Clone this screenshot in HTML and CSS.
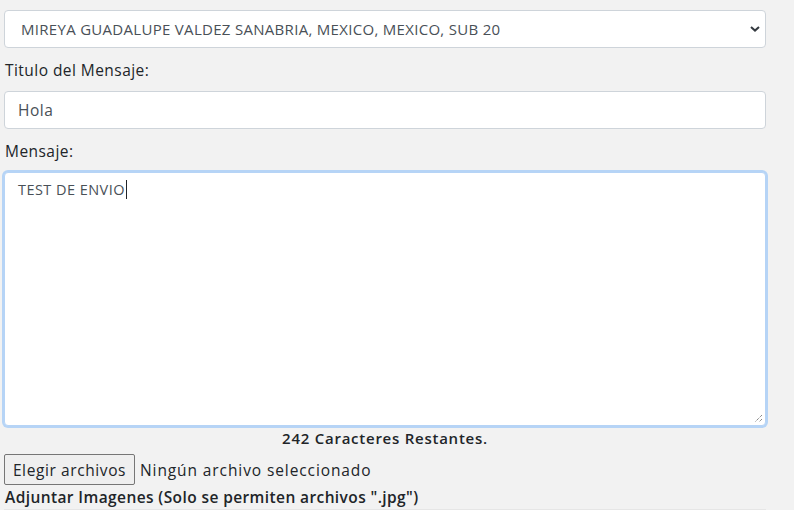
FILE: index.html
```html
<!DOCTYPE html>
<html lang="es">
<head>
<meta charset="utf-8">
<title>Mensaje</title>
<link rel="stylesheet" href="styles.css">
</head>
<body>
<main class="form">
  <div class="select">
    <span class="select-text">MIREYA GUADALUPE VALDEZ SANABRIA, MEXICO, MEXICO, SUB 20</span>
    <svg class="chev" width="10" height="6" viewBox="0 0 10 6"><path d="M1 1 L5 4.6 L9 1" fill="none" stroke="#343a40" stroke-width="2"/></svg>
  </div>
  <label class="label">Titulo del Mensaje:</label>
  <div class="input">Hola</div>
  <label class="label">Mensaje:</label>
  <div class="textarea">
    <span class="ta-text">TEST DE ENVIO</span><span class="caret"></span>
    <svg class="grip" width="9" height="9" viewBox="0 0 9 9"><path d="M8 1 L1 8 M8 5 L5 8" stroke="#555" stroke-width="1" stroke-dasharray="1 1" fill="none"/></svg>
  </div>
  <div class="counter">242 Caracteres Restantes.</div>
  <div class="file">
    <button class="file-btn" type="button">Elegir archivos</button>
    <span class="file-none">Ningún archivo seleccionado</span>
  </div>
  <div class="note">Adjuntar Imagenes (Solo se permiten archivos ".jpg")</div>
  <div class="rule"></div>
</main>
</body>
</html>
```

FILE: styles.css
```css
html, body {
  margin: 0;
  padding: 0;
  background: #f2f2f2;
}
body {
  font-family: "Open Sans", "DejaVu Sans", sans-serif;
  color: #212529;
}
.form {
  width: 762px;
  padding: 10px 0 0 4px;
  display: flex;
  flex-direction: column;
}
.select, .input {
  box-sizing: border-box;
  height: 38px;
  background: #fff;
  border: 1px solid #ced4da;
  border-radius: 4px;
  color: #495057;
  font-size: 15px;
  display: flex;
  align-items: center;
  padding: 0 0 0 16px;
  flex: none;
}
.select-text {
  letter-spacing: 0.3px;
}
.select {
  justify-content: space-between;
  padding-right: 5px;
}
.chev {
  display: block;
}
.label {
  font-size: 15.5px;
  letter-spacing: 0.45px;
  line-height: 20px;
  margin: 12px 0 11px 1px;
  color: #212529;
}
.input {
  padding-left: 13px;
  font-size: 15.5px;
  letter-spacing: 0.5px;
}
.textarea {
  position: relative;
  box-sizing: border-box;
  height: 254px;
  flex: none;
  background: #fff;
  border: 1px solid #b6d4f6;
  border-radius: 4px;
  box-shadow: 0 0 0 2px #b6d4f6;
  color: #495057;
  font-size: 14.5px;
  letter-spacing: 0.45px;
  padding: 7px 0 0 13px;
  line-height: 20px;
}
.caret {
  display: inline-block;
  width: 1px;
  height: 19px;
  background: #212529;
  vertical-align: -4px;
  margin-left: 1px;
}
.grip {
  position: absolute;
  right: 2px;
  bottom: 2px;
}
.counter {
  text-align: center;
  font-weight: 600;
  font-size: 15px;
  letter-spacing: 0.75px;
  line-height: 18px;
  margin-top: 3px;
}
.file {
  display: flex;
  align-items: center;
  margin-top: 7px;
  height: 31px;
}
.file-btn {
  box-sizing: border-box;
  height: 31px;
  width: 131px;
  padding: 0;
  font-family: inherit;
  font-size: 15.5px;
  letter-spacing: 0.6px;
  color: #212529;
  background: #efefef;
  border: 1px solid #767676;
  border-radius: 2px;
  margin: 0;
}
.file-none {
  font-size: 15.5px;
  letter-spacing: 0.9px;
  margin-left: 5px;
  color: #212529;
}
.note {
  font-size: 15.5px;
  font-weight: 600;
  letter-spacing: 0.4px;
  line-height: 20px;
  margin: 2px 0 0 1px;
  white-space: nowrap;
}
.rule {
  height: 2px;
  background: #e6e6e6;
  margin-top: 2px;
}
```
